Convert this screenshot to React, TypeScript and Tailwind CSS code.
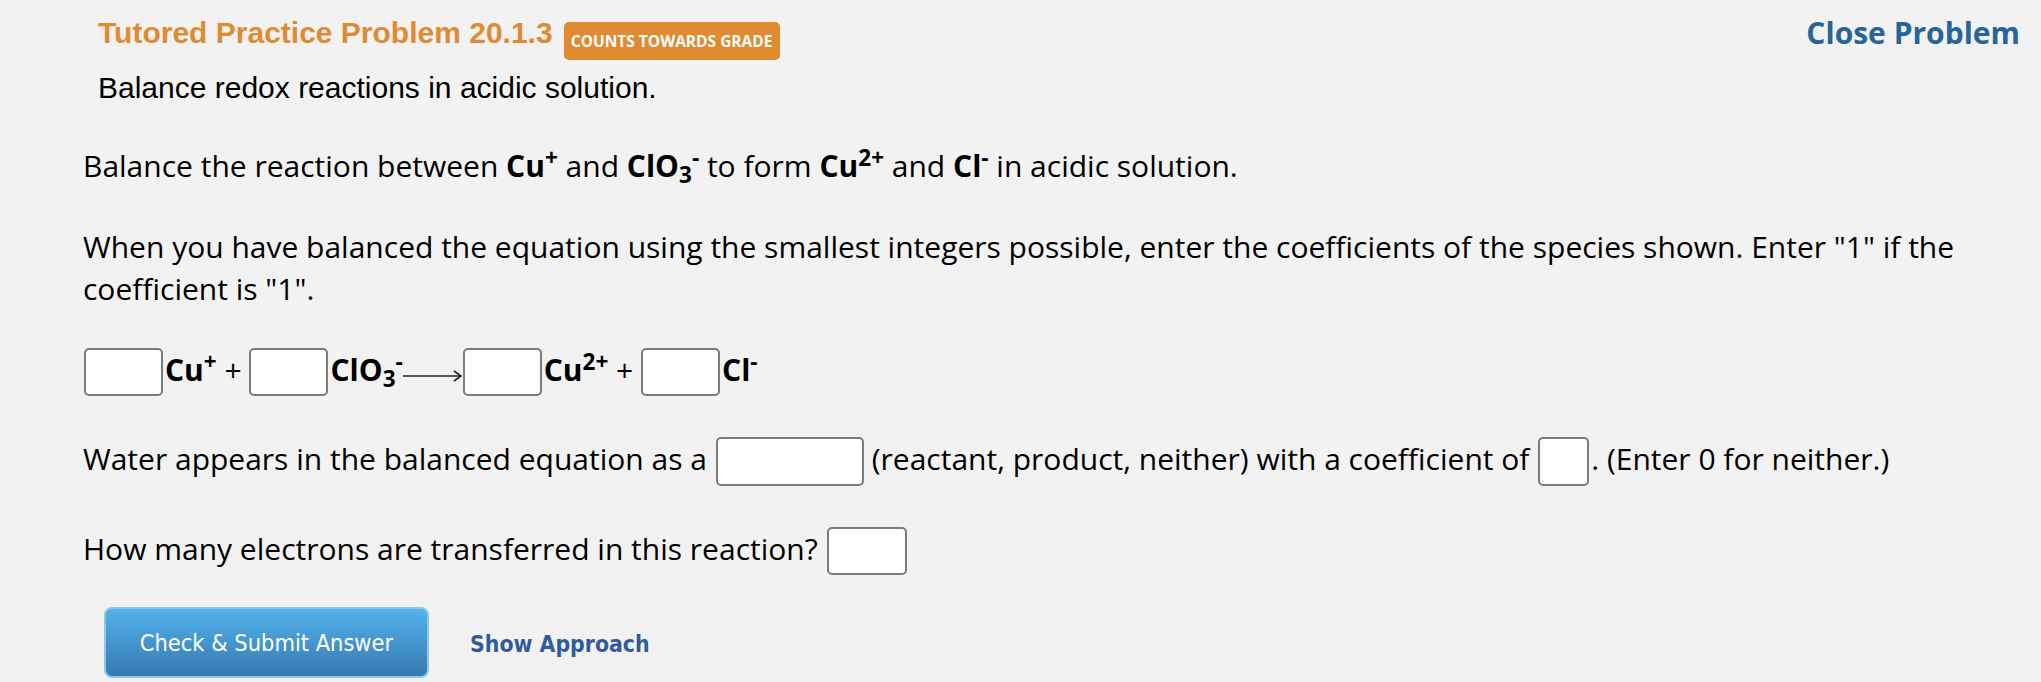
import React from 'react'

function Box({ w = 'w-[79px]', className = '' }: { w?: string; className?: string }) {
  return <input type="text" className={`${w} h-[48px] shrink-0 rounded-[5px] border-2 border-[#7b7b7b] bg-white outline-none ${className}`} />
}

function Arrow() {
  return (
    <svg width="60" height="14" viewBox="0 0 60 14" className="mt-[23px] shrink-0">
      <line x1="0" y1="7" x2="58" y2="7" stroke="#222" strokeWidth="1.6" />
      <path d="M51 2 L58 7 L51 12" fill="none" stroke="#222" strokeWidth="1.6" />
    </svg>
  )
}

export default function App() {
  return (
    <div className="min-h-screen bg-[#f2f2f2] font-['Open_Sans',sans-serif] text-black">
      {/* header */}
      <div className="flex items-start justify-between pl-[98px] pr-[21px] pt-[15px]">
        <div className="flex items-start">
          <h2 className="font-['Liberation_Sans',Arial,sans-serif] text-[30px] font-bold leading-[36px] text-[#e08a31]">
            Tutored Practice Problem 20.1.3
          </h2>
          <span className="ml-[11px] mt-[7px] flex h-[38px] w-[216px] items-center justify-center rounded-[5px] bg-[#e08a31] pt-[2px] text-[15.5px] font-bold text-white">
            COUNTS TOWARDS GRADE
          </span>
        </div>
        <a className="text-[30px] font-bold leading-[36px] text-[#28649a]">Close Problem</a>
      </div>

      <p className="mt-[10px] pl-[98px] font-['Liberation_Sans',Arial,sans-serif] text-[30px] leading-[36px]">
        Balance redox reactions in acidic solution.
      </p>

      <div className="pl-[83px] pr-[60px] text-[30px] leading-[42px]">
        <p className="mt-[39px]">
          Balance the reaction between <b>Cu<sup>+</sup></b> and <b>ClO<sub>3</sub><sup>-</sup></b> to form{' '}
          <b>Cu<sup>2+</sup></b> and <b>Cl<sup>-</sup></b> in acidic solution.
        </p>

        <p className="mt-[39px]">
          When you have balanced the equation using the smallest integers possible, enter the coefficients of the species
          shown. Enter "1" if the coefficient is "1".
        </p>

        {/* equation */}
        <div className="mt-[36px] flex items-start">
          <Box className="ml-[1px] mt-[2px]" />
          <span className="ml-[2px] mt-[3px] font-bold">Cu<sup>+</sup></span>
          <span className="mt-[3px] whitespace-pre">{' + '}</span>
          <Box className="mt-[2px]" />
          <span className="ml-[2px] mt-[3px] font-bold">ClO<sub>3</sub><sup>-</sup></span>
          <Arrow />
          <Box className="mt-[2px]" />
          <span className="ml-[2px] mt-[3px] font-bold">Cu<sup>2+</sup></span>
          <span className="mt-[3px] whitespace-pre">{' + '}</span>
          <Box className="mt-[2px]" />
          <span className="ml-[2px] mt-[3px] font-bold">Cl<sup>-</sup></span>
        </div>

        {/* water */}
        <div className="mt-[39px] flex items-start">
          <span className="mt-[3px] whitespace-pre">Water appears in the balanced equation as a </span>
          <Box w="w-[148px]" className="ml-[1px] mt-[2px] h-[49px]" />
          <span className="ml-[8px] mt-[3px] whitespace-pre">(reactant, product, neither) with a coefficient of </span>
          <Box w="w-[51px]" className="ml-[1px] mt-[2px] h-[49px]" />
          <span className="ml-[2px] mt-[3px] whitespace-pre">. (Enter 0 for neither.)</span>
        </div>

        {/* electrons */}
        <div className="mt-[39px] flex items-start">
          <span className="mt-[3px]">How many electrons are transferred in this reaction?</span>
          <Box w="w-[80px]" className="ml-[9px] mt-[2px]" />
        </div>
      </div>

      {/* actions */}
      <div className="mt-[32px] flex items-center pl-[104px]">
        <button className="flex h-[71px] w-[325px] items-center justify-center rounded-[8px] border-2 border-[#8dc6ee] bg-gradient-to-b from-[#52b2ec] to-[#387ab0] pt-[3px] font-['DejaVu_Sans_Condensed','Liberation_Sans',sans-serif] text-[23.4px] text-white">
          Check &amp; Submit Answer
        </button>
        <a className="ml-[41px] mt-[3px] font-['DejaVu_Sans_Condensed','Liberation_Sans',sans-serif] text-[22.8px] font-bold text-[#2f5b9c]">
          Show Approach
        </a>
      </div>
    </div>
  )
}
